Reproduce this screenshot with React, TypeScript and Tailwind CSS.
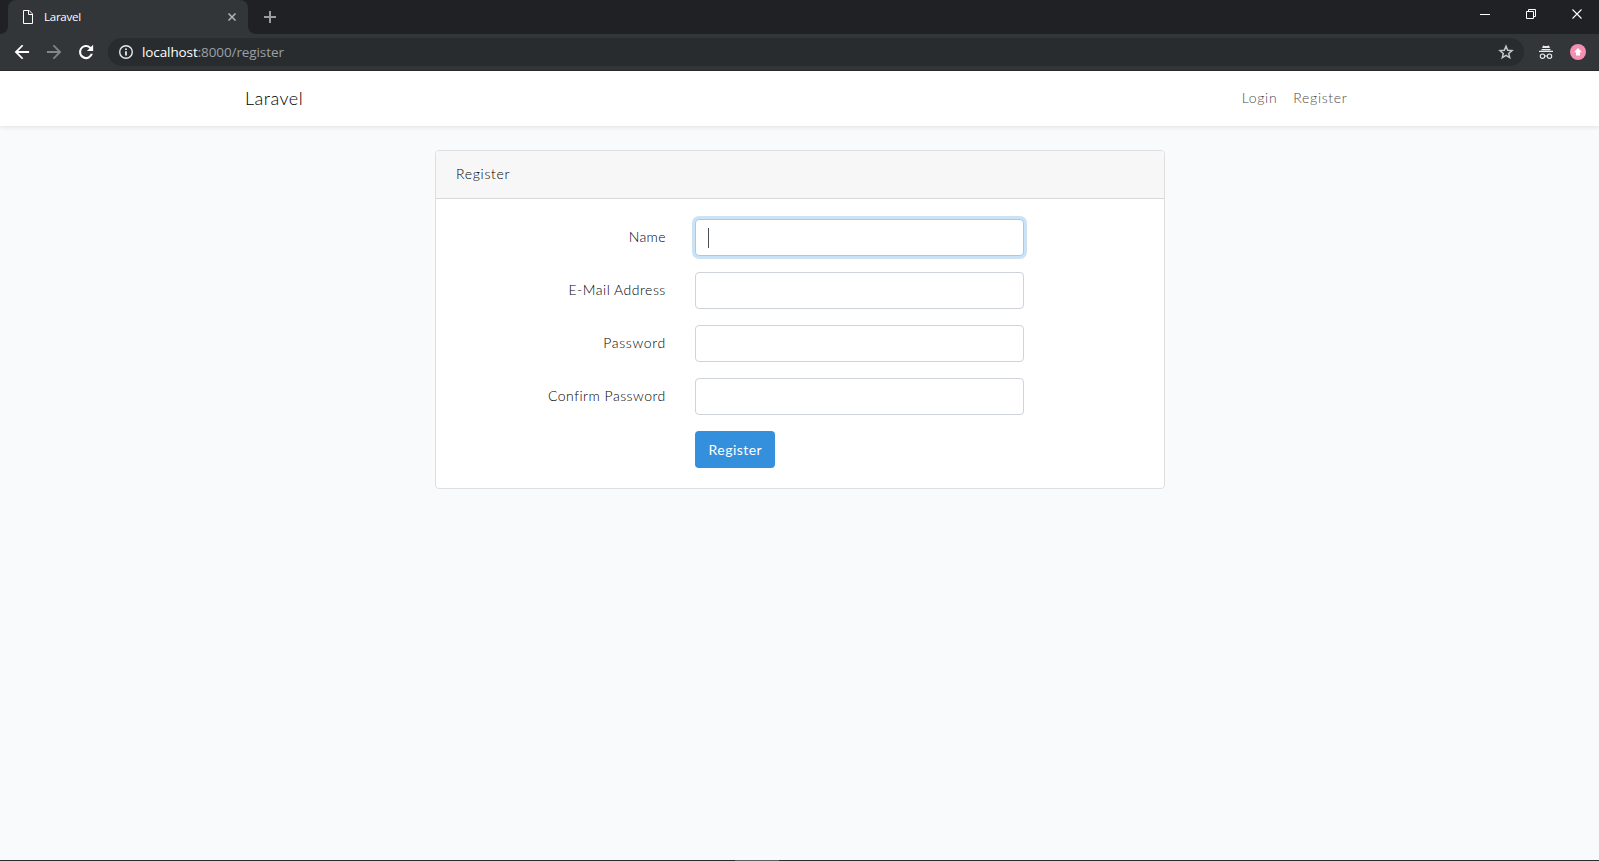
import React from 'react';

const fields = [
  { id: 'name', label: 'Name', type: 'text', spacing: 'tracking-[0.35px]' },
  { id: 'email', label: 'E-Mail Address', type: 'email', spacing: 'tracking-[0.5px]' },
  { id: 'password', label: 'Password', type: 'password', spacing: 'tracking-[0.65px]' },
  { id: 'password-confirm', label: 'Confirm Password', type: 'password', spacing: 'tracking-[0.5px]' },
];

const TabStrip: React.FC = () => (
  <div className="flex h-[34px] bg-[#202124] pl-2">
    <div className="relative flex h-[34px] w-[240px] items-center rounded-t-lg bg-[#323639] pr-[12px] pl-[15px]">
      <svg className="absolute bottom-0 -left-2 h-2 w-2" viewBox="0 0 8 8" fill="#323639">
        <path d="M8 0v8H0a8 8 0 0 0 8-8z" />
      </svg>
      <svg className="absolute -right-2 bottom-0 h-2 w-2" viewBox="0 0 8 8" fill="#323639">
        <path d="M0 0v8h8a8 8 0 0 1-8-8z" />
      </svg>
      <svg className="h-[14px] w-[10px]" viewBox="0 0 10 14" fill="none" stroke="#fff">
        <path d="M.5.5h5.7l3.3 3.4v9.6h-9z" />
        <path d="M5.5.5v4h4" />
      </svg>
      <span className="ml-[11px] flex-1 font-['Open_Sans','Noto_Sans',sans-serif] text-[11.5px] leading-4 font-normal tracking-[-0.25px] text-white">
        Laravel
      </span>
      <svg className="h-2 w-2" viewBox="0 0 8 8" stroke="#b4b7b9" strokeWidth="1.500">
        <path d="M.5.5l7 7M7.500.5l-7 7" />
      </svg>
    </div>
    <svg className="mt-[11px] ml-4 h-3 w-3" viewBox="0 0 12 12" stroke="#9b9ea1" strokeWidth="2">
      <path d="M6 0v12M0 6h12" />
    </svg>
    <div className="mt-[9px] mr-4 ml-auto flex h-[11px] gap-[35px]">
      <svg className="h-[11px] w-[11px]" viewBox="0 0 11 11" fill="#fff">
        <path d="M0 5h10v1H0z" />
      </svg>
      <svg className="h-[11px] w-[11px]" viewBox="0 0 11 11" fill="none" stroke="#fff">
        <path d="M.5 2.500h7v7h-7zM2.500 2.500v-2h7v7h-2" />
      </svg>
      <svg className="h-[11px] w-[11px]" viewBox="0 0 11 11" stroke="#fff" strokeWidth="1.100">
        <path d="M.5.5l9 9M9.500.5l-9 9" />
      </svg>
    </div>
  </div>
);

const Toolbar: React.FC = () => (
  <div className="flex h-[36px] items-center bg-[#323639] pl-[11px]">
    <svg className="h-[22px] w-[22px]" viewBox="0 0 24 24" fill="#fff">
      <path d="M19.700 10.800H7.900l5.500-5.500L12 4 4 12l8 8 1.400-1.300-5.500-5.500h11.800z" />
    </svg>
    <svg className="ml-[10px] h-[22px] w-[22px]" viewBox="0 0 24 24" fill="#83868a">
      <path d="M4.300 10.800h11.800l-5.500-5.500L12 4l8 8-8 8-1.400-1.300 5.500-5.500H4.300z" />
    </svg>
    <svg className="ml-[10px] h-[22px] w-[22px]" viewBox="0 0 24 24" fill="#fff">
      <path d="M17.300 6.500A7.700 7.700 0 1 0 19.500 14h-2.400A5.400 5.400 0 1 1 12 6.500c1.500 0 2.800.65 3.800 1.600L13 11h6.800V4.200z" />
    </svg>
    <div className="ml-[11px] flex h-7 w-[1416px] items-center rounded-full bg-[#282c2f] pr-[10px] pl-[10px]">
      <svg className="h-4 w-4" viewBox="0 0 16 16" fill="none">
        <circle cx="8" cy="8" r="6.300" stroke="#e8eaed" strokeWidth="1.400" />
        <path d="M7.100 7.200h1.800v4.300H7.100zM7.100 4.500h1.800v1.600H7.100z" fill="#e8eaed" />
      </svg>
      <span className="ml-2 flex-1 font-['Open_Sans','Noto_Sans',sans-serif] text-[13.500px] leading-5 font-normal tracking-[-0.1px] text-[#9aa0a6]">
        <span className="text-white">localhost</span>:8000/register
      </span>
      <svg className="h-4 w-4" viewBox="0 0 16 16" fill="none" stroke="#c5c8cb" strokeWidth="1.500">
        <path d="M8 2.200l1.700 4 4.300.4-3.300 2.800 1 4.200L8 11.400l-3.700 2.200 1-4.200L2 6.600l4.300-.4z" />
      </svg>
    </div>
    <svg className="ml-[14px] h-4 w-4" viewBox="0 0 16 16" fill="none">
      <path d="M5 1.500l1.900.5h2.200L11 1.500l.9 2.500H4.100zM3.500 5h9v1.200h-9zM1 6.800h14V8H1z" fill="#e8eaed" />
      <circle cx="4.500" cy="12.200" r="2.200" stroke="#e8eaed" strokeWidth="1.100" />
      <circle cx="11.500" cy="12.200" r="2.200" stroke="#e8eaed" strokeWidth="1.100" />
      <path d="M6.600 12h2.800" stroke="#e8eaed" />
    </svg>
    <svg className="ml-4 h-4 w-4" viewBox="0 0 16 16">
      <circle cx="8" cy="8" r="8" fill="#f48fb1" />
      <path d="M8 4l4 4.300H10V11.500H6V8.300H4z" fill="#fff" />
    </svg>
  </div>
);

const Navbar: React.FC = () => (
  <nav className="relative h-[55px] shrink-0 bg-white shadow-[0_2px_4px_rgba(0,0,0,0.08)]">
    <div className="mx-auto flex h-full w-[1140px] items-center px-[15px] pb-px">
      <a href="#" className="pl-[0.5px] text-[18px] leading-7 font-light tracking-[0.5px] text-black">
        Laravel
      </a>
      <div className="mr-[7px] ml-auto flex gap-4 pb-px text-[14px] leading-[23px] font-light tracking-[0.7px] text-[#4d4d4d]">
        <a href="#">Login</a>
        <a href="#">Register</a>
      </div>
    </div>
  </nav>
);

const RegisterCard: React.FC = () => (
  <div className="mx-auto w-[730px] rounded-[4px] border border-[#dfdfdf] bg-white">
    <div className="h-[48px] rounded-t-[3px] border-b border-[#d8d8d8] bg-[#f7f7f7] pt-[11px] pr-5 pl-[20.500px] leading-[23px] tracking-[0.7px]">
      Register
    </div>
    <form className="flex flex-col gap-4 py-5 pl-[5px]">
      {fields.map((field, index) => (
        <div key={field.id} className="flex h-[37px]">
          <label
            htmlFor={field.id}
            className={`w-[239.300px] pt-[6px] pr-[14px] text-right leading-[23px] ${field.spacing}`}
          >
            {field.label}
          </label>
          <div className="relative w-[359px] px-[15px]">
            <input
              id={field.id}
              type={field.type}
              className={`h-[37px] w-full rounded-[4px] border bg-white px-3 outline-none ${
                index === 0
                  ? 'border-[#a1cbef] shadow-[0_0_0_3px_rgba(52,144,220,0.25)]'
                  : 'border-[#ced4da]'
              }`}
            />
            {index === 0 && <span className="absolute top-[9px] left-[28px] h-5 w-px bg-[#495057]" />}
          </div>
        </div>
      ))}
      <button
        type="button"
        className="ml-[254.300px] h-[37px] w-20 rounded-[4px] bg-[#3490dc] pb-px pl-px leading-[23px] font-normal tracking-[0.45px] text-white"
      >
        Register
      </button>
    </form>
  </div>
);

const App: React.FC = () => (
  <div className="flex h-[861px] w-[1599px] flex-col overflow-hidden bg-[#f8fafc] font-['Lato','Open_Sans',sans-serif] text-[14px] font-light text-black">
    <TabStrip />
    <Toolbar />
    <div className="h-px shrink-0 bg-[#292a2d]" />
    <Navbar />
    <main className="flex-1 pt-6">
      <RegisterCard />
    </main>
    <div className="flex h-px shrink-0 bg-[#2d2b30] pl-[735px]">
      <div className="w-11 bg-[#5e5d61]" />
    </div>
  </div>
);

export default App;
